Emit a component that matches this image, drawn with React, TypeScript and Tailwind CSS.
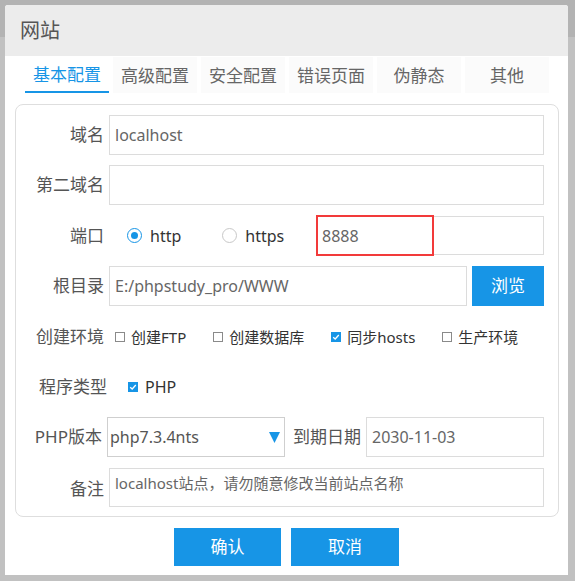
import { useState } from "react";

const FONT = { fontFamily: '"Noto Sans", "Noto Sans CJK SC", sans-serif' };

const tabs = ["基本配置", "高级配置", "安全配置", "错误页面", "伪静态", "其他"];

function Box({ checked }: { checked?: boolean }) {
  if (checked) {
    return (
      <span className="flex h-[10px] w-[10px] items-center justify-center bg-[#1795e6]">
        <svg width="8" height="8" viewBox="0 0 8 8" fill="none">
          <path d="M1.2 4.2 L3.2 6 L6.8 2" stroke="#fff" strokeWidth="1.3" />
        </svg>
      </span>
    );
  }
  return <span className="h-[10px] w-[10px] border border-[#8a8a8a] bg-white" />;
}

function Check({ label, checked }: { label: string; checked?: boolean }) {
  return (
    <label className="flex items-center gap-[6px] text-[15px] text-[#333]">
      <Box checked={checked} />
      {label}
    </label>
  );
}

function Radio({ label, on }: { label: string; on?: boolean }) {
  return (
    <label className="flex items-center gap-[8px] text-[16px] text-[#333]">
      <span
        className={
          on
            ? "flex h-[15px] w-[15px] items-center justify-center rounded-full border border-[#1795e6] bg-white"
            : "h-[15px] w-[15px] rounded-full border border-[#c8c8c8] bg-white"
        }
      >
        {on && <span className="h-[7px] w-[7px] rounded-full bg-[#1795e6]" />}
      </span>
      {label}
    </label>
  );
}

function Field({ value }: { value?: string }) {
  return (
    <div className="flex h-full flex-1 items-center border border-[#dcdcdc] bg-white px-[5px] text-[16px] text-[#666]">
      {value}
    </div>
  );
}

export default function App() {
  const [active, setActive] = useState(0);

  return (
    <div
      className="h-[581px] w-[575px] overflow-hidden bg-[linear-gradient(#b3b3b3_37px,#c1c1c1_37px)] pl-[5px] pt-[5px]"
      style={FONT}
    >
      <div className="flex h-[570px] w-[563px] flex-col rounded-t-[3px] bg-white">
        <div className="flex h-[51px] items-center rounded-t-[3px] bg-[#ececec] pl-[15px] text-[20px] text-[#555]">
          网站
        </div>

        <div className="mt-[1px] flex h-[36px] gap-[4px] pl-[20px]">
          {tabs.map((t, i) => (
            <button
              key={t}
              onClick={() => setActive(i)}
              className={
                i === active
                  ? "flex w-[84px] items-center justify-center border-b-2 border-[#1795e6] pt-[2px] text-[17px] text-[#1795e6]"
                  : "flex w-[84px] items-center justify-center bg-[#fbfbfb] pt-[2px] text-[17px] text-[#666]"
              }
            >
              {t}
            </button>
          ))}
        </div>

        <div className="ml-[10px] mt-[11px] flex w-[544px] flex-col rounded-[8px] border border-[#dedede] pb-[9px] pr-[14px] pt-[10px] text-[17px] text-[#555]">
          <div className="flex h-[40px] items-center">
            <span className="w-[88px] text-right">域名</span>
            <div className="ml-[5px] flex h-full flex-1">
              <Field value="localhost" />
            </div>
          </div>

          <div className="mt-[10px] flex h-[40px] items-center">
            <span className="w-[88px] text-right">第二域名</span>
            <div className="ml-[5px] flex h-full flex-1">
              <Field />
            </div>
          </div>

          <div className="mt-[11px] flex h-[39px] items-center">
            <span className="w-[88px] text-right">端口</span>
            <div className="ml-[5px] flex h-full flex-1 items-center">
              <div className="flex w-[207px] items-center gap-[41px] pl-[18px]">
                <Radio label="http" on />
                <Radio label="https" />
              </div>
              <div className="relative flex h-full flex-1">
                <Field value="8888" />
                <span className="absolute left-0 top-[-1px] h-[41px] w-[118px] border-2 border-[#f23a3a]" />
              </div>
            </div>
          </div>

          <div className="mt-[11px] flex h-[40px] items-center">
            <span className="w-[88px] text-right">根目录</span>
            <div className="ml-[5px] flex h-full flex-1 gap-[5px]">
              <Field value="E:/phpstudy_pro/WWW" />
              <button className="w-[72px] bg-[#1795e6] text-[17px] text-white">浏览</button>
            </div>
          </div>

          <div className="mt-[11px] flex h-[40px] items-center">
            <span className="w-[88px] text-right">创建环境</span>
            <div className="ml-[11px] flex items-center gap-[27px]">
              <Check label="创建FTP" />
              <Check label="创建数据库" />
              <Check label="同步hosts" checked />
              <Check label="生产环境" />
            </div>
          </div>

          <div className="mt-[10px] flex h-[40px] items-center">
            <span className="w-[91px] text-right">程序类型</span>
            <div className="ml-[21px] flex items-center">
              <label className="flex items-center gap-[7px] text-[16px] text-[#333]">
                <Box checked />
                PHP
              </label>
            </div>
          </div>

          <div className="mt-[10px] flex h-[40px] items-center">
            <span className="w-[86px] text-right">PHP版本</span>
            <div className="ml-[5px] flex h-full w-[178px] items-center justify-between border border-[#cfcfcf] bg-white pl-[2px] pr-[4px] text-[16px] text-[#555]">
              php7.3.4nts
              <svg width="11" height="11" viewBox="0 0 11 11">
                <polygon points="0,0 11,0 5.5,11" fill="#1795e6" />
              </svg>
            </div>
            <span className="ml-[8px] w-[68px]">到期日期</span>
            <div className="ml-[5px] flex h-full flex-1">
              <Field value="2030-11-03" />
            </div>
          </div>

          <div className="mt-[11px] flex h-[39px] items-center">
            <span className="w-[88px] pt-[2px] text-right">备注</span>
            <div className="ml-[5px] flex h-full flex-1 border border-[#dcdcdc] bg-white px-[5px] pt-[3px] text-[15px] text-[#666]">
              localhost站点，请勿随意修改当前站点名称
            </div>
          </div>
        </div>

        <div className="mt-[11px] flex justify-center gap-[10px]">
          <button className="h-[38px] w-[107px] bg-[#1795e6] text-[17px] text-white">确认</button>
          <button className="h-[38px] w-[108px] bg-[#1795e6] text-[17px] text-white">取消</button>
        </div>
      </div>
    </div>
  );
}
